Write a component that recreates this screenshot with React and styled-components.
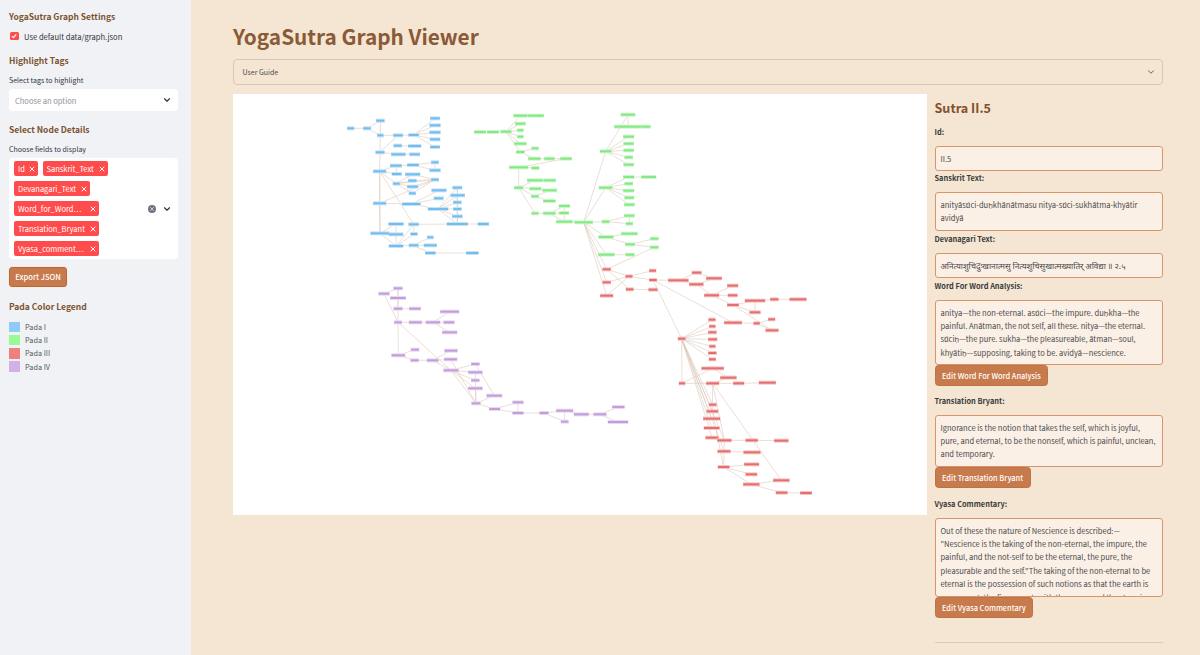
import React from "react";
import styled, { createGlobalStyle } from "styled-components";
import { ChevronDown, X } from "lucide-react";

const FONT = `"Noto Sans CJK JP", "Noto Sans", sans-serif`;

const Global = createGlobalStyle`
  html, body { margin: 0; padding: 0; height: 655px; overflow: hidden; background: #f5e6d3; }
  body { font-family: ${FONT}; }
  * { box-sizing: border-box; }
`;

const Page = styled.div`
  display: grid; grid-template-columns: 191px 1fr; height: 655px; overflow: hidden;
`;
const Sidebar = styled.aside`
  background: #f0f2f6; padding: 9px 13px 0 9px; display: flex; flex-direction: column;
`;
const SideHeading = styled.h3`
  margin: ${p => p.$top || 0}px 0 0; font-size: 8.5px; line-height: 14px; font-weight: 700; color: #7d5230;
`;
const CheckRow = styled.label`
  display: flex; align-items: center; gap: 5.5px; margin: 6px 0 0 1px; height: 14px;
  font-size: 7.6px; color: #31333f;
`;
const CheckBox = styled.span`
  width: 8.5px; height: 8.5px; border-radius: 1.5px; background: #ff4b4b; display: flex; align-items: center; justify-content: center;
`;
const FieldLabel = styled.div`
  margin-top: ${p => p.$top || 0}px; font-size: 7px; line-height: 10px; color: #31333f;
`;
const SelectBox = styled.div`
  margin-top: 4px; height: 22px; background: #fff; border-radius: 4px; display: flex; align-items: center;
  justify-content: space-between; padding: 0 6px 0 6px; font-size: 7.5px; color: #8e9097;
`;
const MultiBox = styled.div`
  margin-top: 4px; height: 101px; background: #fff; border-radius: 4px; display: flex; align-items: center; padding: 3px 6px 3px 5px;
`;
const TagWrap = styled.div`
  flex: 1; display: flex; flex-wrap: wrap; gap: 5.5px 4.5px; align-content: flex-start;
`;
const TagRow = styled.div`
  display: flex; gap: 4.5px; width: 100%;
`;
const Tag = styled.span`
  height: 14.5px; background: #ff4b4b; color: #fff; border-radius: 2px; font-size: 7.5px; display: inline-flex;
  align-items: center; gap: 2px; padding: 0 2px 0 4px; width: ${p => p.$w}px; justify-content: space-between; white-space: nowrap;
  svg { flex: none; }
`;
const Tools = styled.div`
  display: flex; align-items: center; gap: 6px;
`;
const ClearDot = styled.span`
  width: 8px; height: 8px; border-radius: 50%; background: #6f7480; display: flex; align-items: center; justify-content: center;
`;
const SideButton = styled.button`
  margin-top: 7.5px; width: 58px; height: 20px; border-radius: 3px; border: 1px solid #b56a3d; background: #c77a4b; color: #fff;
  font: 500 7.6px ${FONT}; padding: 0; box-shadow: 0 0 0 1px #f6ede4;
`;
const Legend = styled.div`
  margin-top: 9px; display: flex; flex-direction: column; gap: 2.7px;
`;
const LegendRow = styled.div`
  display: flex; align-items: center; gap: 5px; height: 10.6px; font-size: 7.3px; color: #555a63;
`;
const Swatch = styled.span`
  width: 11px; height: 10.6px; background: ${p => p.$c};
`;
const Main = styled.main`
  padding: 18px 37px 0 42px; display: flex; flex-direction: column; min-width: 0;
`;
const Title = styled.h1`
  margin: 0; font-size: 20.8px; line-height: 36px; height: 41px; font-weight: 700; color: #8a5a38; white-space: nowrap;
`;
const Expander = styled.div`
  height: 26px; border: 1px solid #d8c5b3; border-radius: 4px; display: flex; align-items: center; justify-content: space-between;
  padding: 0 6px 0 8.5px; font-size: 7px; color: #4a4a4a;
`;
const Columns = styled.div`
  margin-top: 9px; display: grid; grid-template-columns: 694px 229px; column-gap: 7px; align-items: start;
`;
const GraphCard = styled.div`
  background: #fff; height: 421px;
`;
const GraphSvg = styled.svg`
  display: block;
`;
const Details = styled.section`
  display: flex; flex-direction: column; padding-left: 0.5px;
`;
const SutraTitle = styled.h2`
  margin: 3.5px 0 8px; font-size: 12.6px; line-height: 19px; font-weight: 700; color: #84502b;
`;
const DetailLabel = styled.div`
  font-size: 7.4px; line-height: 13px; font-weight: 700; color: #3b3b3b; margin-bottom: 8px; margin-top: ${p => p.$top || 0}px;
`;
const TextBox = styled.div`
  background: #faf0e6; border: 1px solid #d9946c; border-radius: 3px; padding: 5px 5px; font-size: ${p => p.$size || 7.55}px; line-height: 13.4px; color: #4a4a4a;
  height: ${p => p.$h}px; overflow: hidden; white-space: pre-wrap; flex: none;
`;
const EditButton = styled.button`
  align-self: flex-start; height: 21px; border: 1px solid #bc7348; border-radius: 3.5px; background: #c77a4b; color: #fff;
  font: 500 7.4px ${FONT}; padding: 0 6.5px; flex: none;
`;
const Rule = styled.hr`
  margin: 24px 0 0; border: 0; border-top: 1px solid #dccabb;
`;

const clusters = {
  b: { o: [340, 100], h: "#c4e2f8", f: "#74bcec", n: [[32,85,22],[81,85,24],[121,62,26],[121,106,20],[174,106,30],[221,105,32],[285,55,30],[285,76,34],[285,97,34],[285,118,32],[285,141,30],[173,137,26],[224,138,40],[120,157,28],[175,163,44],[224,163,32],[168,197,36],[219,195,36],[285,187,24],[285,211,34],[119,214,40],[170,222,30],[218,223,46],[169,251,22],[217,242,26],[218,260,34],[285,239,24],[217,280,22],[297,271,46],[296,295,30],[119,310,40],[214,312,56],[294,327,62],[352,263,30],[353,286,44],[352,307,26],[352,327,26],[352,349,32],[352,372,64],[430,372,34],[168,372,46],[221,373,32],[120,400,58],[168,403,44],[222,402,22],[168,438,44],[221,436,30],[271,412,20],[271,436,40],[271,459,32],[397,459,38]],
    e: "0-1 1-2 1-3 2-3 3-4 4-5 5-6 5-7 5-8 5-9 5-10 3-13 4-13 11-12 13-14 14-15 13-20 20-16 16-17 17-18 17-19 18-19 16-21 20-21 20-23 20-30 30-42 20-42 20-41 23-22 23-24 23-25 23-26 22-26 24-26 25-26 23-27 27-26 30-26 30-31 31-28 31-29 31-32 32-33 32-34 32-35 32-36 32-37 32-38 33-38 33-38 38-39 41-38 42-40 42-43 42-45 40-45 41-44 41-45 44-45 45-46 46-47 46-48 46-49 49-50" },
  g: { o: [470, 105], h: "#c9f7c9", f: "#85e885", n: [[30,81,36],[69,81,36],[108,80,34],[151,32,42],[197,32,50],[151,56,32],[151,76,20],[151,95,20],[151,116,38],[195,130,22],[151,141,26],[193,161,38],[238,161,32],[288,161,36],[146,187,58],[196,189,24],[146,248,28],[195,226,48],[239,226,38],[196,251,36],[239,256,44],[195,274,24],[238,288,38],[195,325,22],[238,325,38],[283,303,34],[282,324,30],[283,350,50],[341,352,56],[474,29,44],[474,65,84],[528,65,28],[407,139,36],[476,95,34],[476,116,32],[476,136,32],[476,157,26],[476,179,32],[407,248,42],[476,216,34],[536,216,46],[476,236,26],[476,257,34],[478,278,30],[478,299,32],[407,350,24],[478,332,32],[478,356,22],[408,396,46],[478,386,50],[480,418,30],[553,401,26],[553,427,26],[409,449,50],[480,449,28]],
    e: "0-1 1-2 2-3 3-4 2-5 2-6 2-7 2-8 2-10 10-9 10-11 11-12 12-13 14-13 14-15 14-16 16-17 17-18 16-19 16-21 19-20 21-22 21-20 16-23 23-24 24-25 24-26 24-27 25-27 27-28 28-32 28-38 32-29 29-30 30-31 32-33 32-34 32-35 32-36 32-37 38-39 39-40 38-41 38-42 38-43 38-44 28-45 45-46 45-47 46-47 28-48 48-49 48-50 50-51 50-52 28-53 53-54" },
  r: { o: [590, 260], h: "#f6c4c4", f: "#e66e6e", n: [[50,28,26],[50,67,26],[50,107,40],[117,49,22],[188,32,22],[189,60,24],[119,88,24],[189,89,28],[265,61,62],[320,38,30],[372,55,48],[319,73,44],[428,77,34],[365,106,46],[428,106,30],[429,135,36],[495,122,62],[553,118,26],[624,118,52],[495,157,34],[429,188,54],[500,190,20],[545,178,22],[546,211,40],[275,236,24],[366,179,22],[367,199,20],[367,217,26],[368,238,28],[367,259,20],[367,279,26],[367,298,22],[368,325,68],[415,353,50],[276,370,20],[368,370,40],[446,370,34],[532,368,52],[368,434,24],[367,454,36],[365,476,52],[365,504,48],[366,533,40],[403,541,44],[485,541,38],[574,542,44],[402,574,40],[486,577,52],[401,621,36],[485,613,46],[484,643,36],[484,673,50],[574,661,50],[575,698,36],[648,699,36]],
    e: "0-3 1-3 2-3 3-4 3-5 0-6 6-7 5-8 8-9 9-10 8-11 10-11 11-13 12-13 13-14 13-15 15-16 16-17 17-18 16-19 15-19 5-24 5-20 20-21 21-22 21-23 15-23 24-25 24-26 24-27 24-28 24-29 24-30 24-31 24-34 34-32 32-33 33-35 34-35 35-36 36-37 24-38 24-39 24-40 24-41 24-42 24-43 24-46 35-39 35-52 35-43 43-44 44-45 43-46 46-47 46-48 48-49 48-50 48-51 51-52 51-53 53-54 39-48" },
  p: { o: [370, 280], h: "#e8d8f1", f: "#c49cdb", n: [[42,41,34],[84,25,28],[84,54,48],[84,86,28],[135,86,36],[84,127,24],[136,127,40],[189,127,44],[239,95,58],[237,127,34],[239,157,46],[85,226,42],[135,209,26],[134,241,26],[188,241,36],[243,212,40],[242,238,40],[243,271,46],[316,252,26],[316,277,44],[316,301,26],[316,325,44],[373,347,48],[318,370,28],[374,387,34],[444,367,34],[444,399,34],[522,399,28],[584,392,52],[634,403,46],[584,425,24],[690,403,40],[745,381,38],[744,426,62]],
    e: "0-1 1-2 2-3 1-3 3-4 3-5 0-5 5-6 6-7 7-8 7-9 7-10 5-11 11-12 11-13 13-14 14-15 14-16 14-17 5-17 16-23 17-18 17-19 17-20 17-21 17-23 18-22 22-23 23-24 24-25 24-26 25-26 26-27 27-28 27-30 28-29 28-30 29-31 31-32 31-33 21-23 19-23" },
};

const pos = (c, i) => {
  const cl = clusters[c];
  const [x, y, w] = cl.n[i];
  return { x: cl.o[0] + x / 3 - 233, y: cl.o[1] + y / 3 - 94, w: w / 3 };
};
const cross = [["g",28,"r",0],["g",28,"r",1],["g",28,"r",2],["g",52,"r",0]];

function Graph() {
  const lines = [];
  Object.entries(clusters).forEach(([c, cl]) => {
    cl.e.split(" ").forEach(s => {
      const [a, b] = s.split("-").map(Number);
      lines.push([c, a, c, b]);
    });
  });
  cross.forEach(l => lines.push(l));
  return (
    <GraphSvg width="694" height="421" viewBox="0 0 694 421">
      <g stroke="#dccabb" strokeWidth="0.6" fill="none">
        {lines.map(([c1, a, c2, b], i) => {
          const p = pos(c1, a), q = pos(c2, b);
          return <line key={i} x1={p.x} y1={p.y} x2={q.x} y2={q.y} />;
        })}
      </g>
      {Object.entries(clusters).map(([c, cl]) =>
        cl.n.map((_, i) => {
          const p = pos(c, i);
          return (
            <g key={c + i}>
              <rect x={p.x - p.w / 2} y={p.y - 2} width={p.w} height="4" fill={cl.h} />
              <rect x={p.x - p.w / 2 + 0.3} y={p.y - 1} width={p.w - 0.6} height="2" fill={cl.f} />
            </g>
          );
        })
      )}
    </GraphSvg>
  );
}

const Small = ({ c = "#fff", s = 8, w = 3 }) => <X size={s} color={c} strokeWidth={w} />;

export default function App() {
  return (
    <Page>
      <Global />
      <Sidebar>
        <SideHeading>YogaSutra Graph Settings</SideHeading>
        <CheckRow>
          <CheckBox>
            <svg width="6" height="6" viewBox="0 0 10 10"><path d="M1.5 5.2 4 7.8 8.7 2.4" fill="none" stroke="#fff" strokeWidth="2" /></svg>
          </CheckBox>
          Use default data/graph.json
        </CheckRow>
        <SideHeading $top={10}>Highlight Tags</SideHeading>
        <FieldLabel $top={8}>Select tags to highlight</FieldLabel>
        <SelectBox>Choose an option<ChevronDown size={10} color="#31333f" strokeWidth={2.8} /></SelectBox>
        <SideHeading $top={11}>Select Node Details</SideHeading>
        <FieldLabel $top={8}>Choose fields to display</FieldLabel>
        <MultiBox>
          <TagWrap>
            <TagRow><Tag $w={24}>Id<Small /></Tag><Tag $w={65}>Sanskrit_Text<Small /></Tag></TagRow>
            <TagRow><Tag $w={76}>Devanagari_Text<Small /></Tag></TagRow>
            <TagRow><Tag $w={85}>Word_for_Word…<Small /></Tag></TagRow>
            <TagRow><Tag $w={85}>Translation_Bryant<Small /></Tag></TagRow>
            <TagRow><Tag $w={85}>Vyasa_comment…<Small /></Tag></TagRow>
          </TagWrap>
          <Tools>
            <ClearDot><Small s={6} w={2.5} /></ClearDot>
            <ChevronDown size={10} color="#31333f" strokeWidth={2.8} />
          </Tools>
        </MultiBox>
        <SideButton>Export JSON</SideButton>
        <SideHeading $top={12}>Pada Color Legend</SideHeading>
        <Legend>
          <LegendRow><Swatch $c="#8ecbf8" />Pada I</LegendRow>
          <LegendRow><Swatch $c="#98fb98" />Pada II</LegendRow>
          <LegendRow><Swatch $c="#f08080" />Pada III</LegendRow>
          <LegendRow><Swatch $c="#d3b0e6" />Pada IV</LegendRow>
        </Legend>
      </Sidebar>
      <Main>
        <Title>YogaSutra Graph Viewer</Title>
        <Expander>User Guide<ChevronDown size={10} color="#4a4a4a" strokeWidth={2} /></Expander>
        <Columns>
          <GraphCard><Graph /></GraphCard>
          <Details>
            <SutraTitle>Sutra II.5</SutraTitle>
            <DetailLabel>Id:</DetailLabel>
            <TextBox $h={25}>II.5</TextBox>
            <DetailLabel>Sanskrit Text:</DetailLabel>
            <TextBox $h={39}>anityāśuci-duḥkhānātmasu nitya-śuci-sukhātma-khyātir avidyā</TextBox>
            <DetailLabel $top={1}>Devanagari Text:</DetailLabel>
            <TextBox $h={25} $size={8.3}>अनित्याशुचिदुःखानात्मसु नित्यशुचिसुखात्मख्यातिर् अविद्या ॥ २.५</TextBox>
            <DetailLabel $top={1}>Word For Word Analysis:</DetailLabel>
            <TextBox $h={65}>anitya—the non-eternal. aśuci—the impure. duḥkha—the painful. Anātman, the not self, all these. nitya—the eternal. śuciḥ—the pure. sukha—the pleasureable, ātman—soul, khyātiḥ—supposing, taking to be. avidyā—nescience.</TextBox>
            <EditButton>Edit Word For Word Analysis</EditButton>
            <DetailLabel $top={8}>Translation Bryant:</DetailLabel>
            <TextBox $h={52}>Ignorance is the notion that takes the self, which is joyful, pure, and eternal, to be the nonself, which is painful, unclean, and temporary.</TextBox>
            <EditButton>Edit Translation Bryant</EditButton>
            <DetailLabel $top={9}>Vyasa Commentary:</DetailLabel>
            <TextBox $h={79}>{"Out of these the nature of Nescience is described:—\n\"Nescience is the taking of the non-eternal, the impure, the painful, and the not-self to be the eternal, the pure, the pleasurable and the self.\"The taking of the non-eternal to be eternal is the possession of such notions as that the earth is permanent, the firmament, with the moon and the stars, is everlasting."}</TextBox>
            <EditButton>Edit Vyasa Commentary</EditButton>
            <Rule />
          </Details>
        </Columns>
      </Main>
    </Page>
  );
}
